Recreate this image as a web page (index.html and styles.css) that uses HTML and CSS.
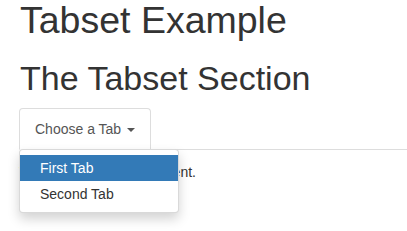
FILE: index.html
```html
<!DOCTYPE html>
<html lang="en">

<head>
    <meta charset="UTF-8">
    <meta name="viewport" content="width=device-width, initial-scale=1.0">
    <link rel="stylesheet" href="styles.css">
    <title>Tabset Example</title>
</head>

<body>
    <div class="page">
        <h1 class="title">Tabset Example</h1>
        <h2 class="section-title">The Tabset Section</h2>

        <ul class="nav-tabs">
            <li class="tab-item open">
                <a class="tab-link" href="#">Choose a Tab <span class="caret"></span></a>
                <ul class="dropdown-menu">
                    <li><a class="menu-item active" href="#tab-1">First Tab</a></li>
                    <li><a class="menu-item" href="#tab-2">Second Tab</a></li>
                </ul>
            </li>
        </ul>

        <div class="tab-content">
            <p id="tab-1">This is the first tab's content.</p>
        </div>
    </div>
</body>
</html>
```

FILE: styles.css
```css
* {
    box-sizing: border-box;
    margin: 0;
    padding: 0;
}

html,
body {
    min-height: 100%;
}

body {
    background-color: #fff;
    color: #333;
    font-family: "Liberation Sans", Arial, sans-serif;
    font-size: 14px;
    line-height: 20px;
}

.page {
    min-height: 231px;
    padding-left: 19px;
}

.title {
    font-size: 37.5px;
    font-weight: 500;
    line-height: 1.1;
    margin-left: 1px;
    margin-bottom: 10px;
}

.section-title {
    font-size: 34px;
    font-weight: 500;
    line-height: 1.1;
    margin-top: 19px;
    margin-bottom: 10px;
    margin-left: 1px;
}

.nav-tabs {
    list-style: none;
    display: flex;
    border-bottom: 1px solid #ddd;
}

.tab-item {
    position: relative;
    margin-bottom: -1px;
}

.tab-link {
    display: block;
    margin-right: 2px;
    padding: 10px 15px;
    color: #555;
    text-decoration: none;
    background-color: #fff;
    border: 1px solid #ddd;
    border-bottom-color: transparent;
    border-radius: 4px 4px 0 0;
}

.caret {
    display: inline-block;
    width: 0;
    height: 0;
    margin-left: 2px;
    vertical-align: middle;
    border-top: 4px solid;
    border-right: 4px solid transparent;
    border-left: 4px solid transparent;
}

/* open menu sits over the tab content */
.dropdown-menu {
    position: absolute;
    top: 100%;
    left: 0;
    z-index: 10;
    min-width: 160px;
    margin-top: -1px;
    padding: 5px 0;
    list-style: none;
    background-color: #fff;
    border: 1px solid rgba(0, 0, 0, 0.15);
    border-radius: 4px;
    box-shadow: 0 6px 12px rgba(0, 0, 0, 0.175);
}

.menu-item {
    display: block;
    padding: 3px 20px;
    color: #333;
    text-decoration: none;
    white-space: nowrap;
}

.menu-item.active {
    color: #fff;
    background-color: #337ab7;
}

.tab-content {
    padding-top: 12px;
}
```
